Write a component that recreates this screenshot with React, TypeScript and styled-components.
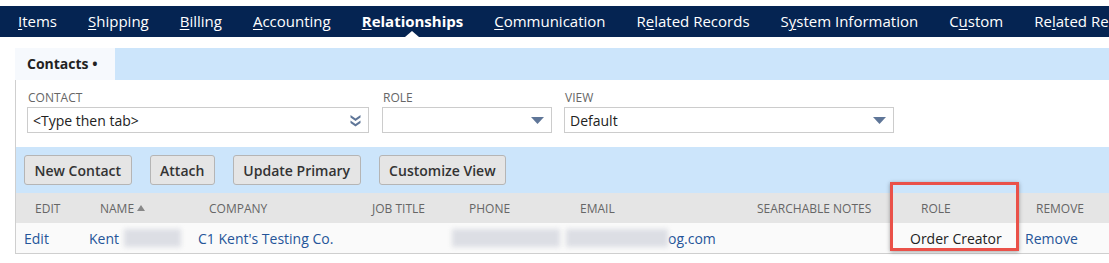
import styled, { createGlobalStyle } from "styled-components";

const GlobalStyle = createGlobalStyle`
  body {
    margin: 0;
    background: #fff;
    font-family: "Open Sans", "DejaVu Sans", sans-serif;
    color: #222;
  }
`;

const navy = "#052452";
const skyBlue = "#cce5fb";
const link = "#255599";
const iconBlue = "#5f7698";

const Page = styled.div`
  position: relative;
  width: 1109px;
  height: 263px;
  overflow: hidden;
  padding-top: 6px;
  box-sizing: border-box;
`;

const NavBar = styled.nav`
  height: 31px;
  background: ${navy};
  display: flex;
  align-items: center;
  gap: 31px;
  padding-left: 18px;
  white-space: nowrap;
  overflow: hidden;
`;

const NavItem = styled.span<{ $active?: boolean }>`
  position: relative;
  color: #fff;
  font-size: 15px;
  line-height: 31px;
  font-weight: ${(p) => (p.$active ? 700 : 400)};

  u {
    text-decoration-thickness: 1px;
    text-underline-offset: 2px;
  }

  &::after {
    content: "";
    display: ${(p) => (p.$active ? "block" : "none")};
    position: absolute;
    left: 50%;
    bottom: 0;
    margin-left: -7px;
    border-left: 7px solid transparent;
    border-right: 7px solid transparent;
    border-bottom: 6px solid #fff;
  }
`;

const SubTabs = styled.div`
  margin: 11px 0 0 15px;
  height: 32px;
  display: flex;
  background: ${skyBlue};
`;

const SubTab = styled.div`
  width: 100px;
  background: #f6f9fd;
  font-size: 14px;
  font-weight: 700;
  line-height: 32px;
  padding-left: 12px;
  box-sizing: border-box;
`;

const Panel = styled.div`
  margin-left: 15px;
  border-left: 1px solid #cfcfcf;
  border-bottom: 1px solid #cfcfcf;
`;

const FieldRow = styled.div`
  display: flex;
  padding: 10px 0 14px 11px;
`;

const Field = styled.div<{ $width: number; $gap: number }>`
  width: ${(p) => p.$width}px;
  margin-right: ${(p) => p.$gap}px;
  display: flex;
  flex-direction: column;
`;

const Label = styled.label`
  font-size: 12px;
  line-height: 16px;
  color: #666;
  text-transform: uppercase;
  padding-left: 1px;
  margin-bottom: 1px;
`;

const Input = styled.div`
  height: 26px;
  border: 1px solid #cccccc;
  box-sizing: border-box;
  display: flex;
  align-items: center;
  justify-content: space-between;
  padding: 0 7px 0 5px;
  font-size: 14px;
  color: #222;
  background: #fff;
`;

const ButtonBar = styled.div`
  background: ${skyBlue};
  height: 46px;
  display: flex;
  align-items: center;
  gap: 18px;
  padding-left: 8px;
`;

const Button = styled.button`
  height: 30px;
  padding: 0 9.5px;
  border: 1px solid #b5b5b5;
  border-radius: 3px;
  background: #e5e5e5;
  font-family: inherit;
  font-size: 14px;
  font-weight: 600;
  color: #333;
`;

const Row = styled.div<{ $header?: boolean }>`
  display: flex;
  align-items: center;
  height: 30px;
  padding-left: ${(p) => (p.$header ? 19 : 8)}px;
  background: ${(p) => (p.$header ? "#e5e5e5" : "#fafafa")};
  white-space: nowrap;
`;

const HeadCell = styled.div<{ $width?: number }>`
  width: ${(p) => (p.$width ? `${p.$width}px` : "auto")};
  flex-shrink: 0;
  font-size: 12px;
  color: #666;
  text-transform: uppercase;
  display: flex;
  align-items: center;
  gap: 3px;
`;

const Cell = styled.div<{ $width?: number; $plain?: boolean }>`
  width: ${(p) => (p.$width ? `${p.$width}px` : "auto")};
  flex-shrink: 0;
  font-size: 14px;
  color: ${(p) => (p.$plain ? "#222" : link)};
  display: flex;
  align-items: center;
`;

const Blur = styled.span<{ $width: number; $gapLeft?: number }>`
  display: inline-block;
  width: ${(p) => p.$width}px;
  height: 18px;
  margin-left: ${(p) => p.$gapLeft ?? 0}px;
  background: #dcdee4;
  filter: blur(2.5px);
`;

const Highlight = styled.div`
  position: absolute;
  left: 890px;
  top: 182px;
  width: 129px;
  height: 69px;
  border: 3px solid #ea5149;
  box-sizing: border-box;
  box-shadow: 0 1px 4px rgba(0, 0, 0, 0.35);
  pointer-events: none;
`;

const DoubleChevron = () => (
  <svg width="11" height="13" viewBox="0 0 11 13">
    <path d="M0.5 1 L5.5 4.5 L10.5 1 L10.5 3.5 L5.5 7 L0.5 3.5 Z" fill={iconBlue} />
    <path d="M0.5 6.5 L5.5 10 L10.5 6.5 L10.5 9 L5.5 12.5 L0.5 9 Z" fill={iconBlue} />
  </svg>
);

const Caret = () => (
  <svg width="13" height="7" viewBox="0 0 13 7">
    <path d="M0 0 H13 L6.5 7 Z" fill={iconBlue} />
  </svg>
);

const SortUp = () => (
  <svg width="8" height="6" viewBox="0 0 8 6">
    <path d="M0 6 L4 0 L8 6 Z" fill="#888" />
  </svg>
);

const tabs: [string, string, string, boolean?][] = [
  ["", "I", "tems"],
  ["", "S", "hipping"],
  ["", "B", "illing"],
  ["", "A", "ccounting"],
  ["", "R", "elationships", true],
  ["", "C", "ommunication"],
  ["R", "e", "lated Records"],
  ["S", "y", "stem Information"],
  ["C", "u", "stom"],
  ["Re", "l", "ated Records"],
];

const headers: [string, number?][] = [
  ["Edit", 65],
  ["Name", 109],
  ["Company", 163],
  ["Job Title", 97],
  ["Phone", 111],
  ["Email", 177],
  ["Searchable Notes", 164],
  ["Role", 115],
  ["Remove"],
];

export default function App() {
  return (
    <Page>
      <GlobalStyle />
      <NavBar>
        {tabs.map(([pre, key, rest, active]) => (
          <NavItem key={pre + key + rest} $active={active}>
            {pre}
            <u>{key}</u>
            {rest}
          </NavItem>
        ))}
      </NavBar>

      <SubTabs>
        <SubTab>Contacts •</SubTab>
      </SubTabs>

      <Panel>
        <FieldRow>
          <Field $width={342} $gap={13}>
            <Label>Contact</Label>
            <Input>
              &lt;Type then tab&gt;
              <DoubleChevron />
            </Input>
          </Field>
          <Field $width={170} $gap={12}>
            <Label>Role</Label>
            <Input>
              <span />
              <Caret />
            </Input>
          </Field>
          <Field $width={330} $gap={0}>
            <Label>View</Label>
            <Input>
              Default
              <Caret />
            </Input>
          </Field>
        </FieldRow>

        <ButtonBar>
          <Button>New Contact</Button>
          <Button>Attach</Button>
          <Button>Update Primary</Button>
          <Button>Customize View</Button>
        </ButtonBar>

        <Row $header>
          {headers.map(([label, width]) => (
            <HeadCell key={label} $width={width}>
              {label}
              {label === "Name" && <SortUp />}
            </HeadCell>
          ))}
        </Row>

        <Row>
          <Cell $width={65}>Edit</Cell>
          <Cell $width={109}>
            Kent
            <Blur $width={57} $gapLeft={5} />
          </Cell>
          <Cell $width={254}>C1 Kent's Testing Co.</Cell>
          <Cell $width={114}>
            <Blur $width={108} />
          </Cell>
          <Cell $width={344}>
            <Blur $width={102} />
            og.com
          </Cell>
          <Cell $width={115} $plain>
            Order Creator
          </Cell>
          <Cell>Remove</Cell>
        </Row>
      </Panel>

      <Highlight />
    </Page>
  );
}
